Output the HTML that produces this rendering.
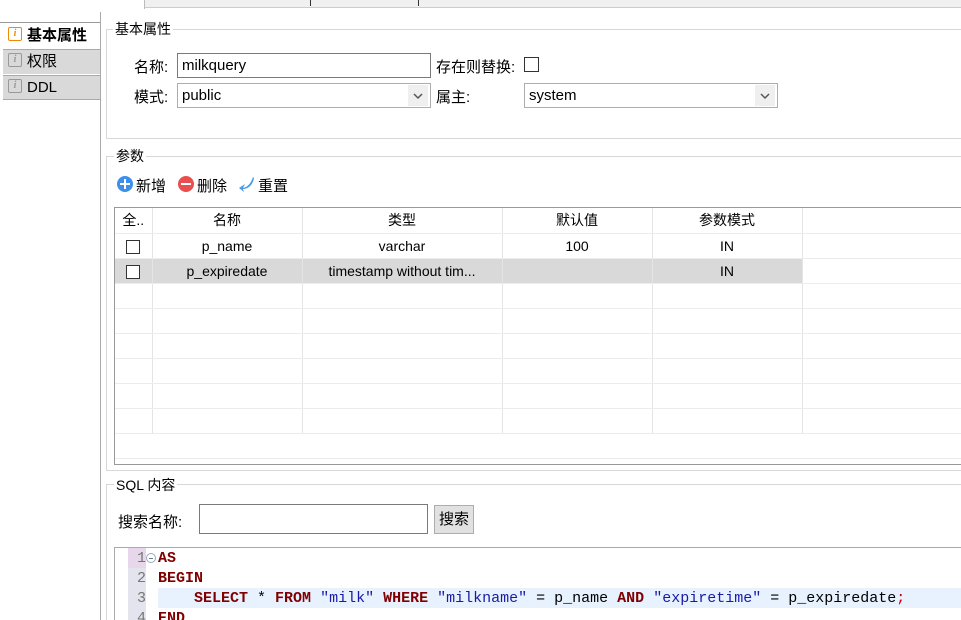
<!DOCTYPE html>
<html><head><meta charset="utf-8"><style>
*{box-sizing:border-box;margin:0;padding:0}
html,body{width:961px;height:620px;overflow:hidden}
body{background:#fff;font-family:"Liberation Sans","Noto Sans CJK SC",sans-serif;font-size:14px;color:#000;position:relative}
.a{position:absolute}
.grp{position:absolute;border:1px solid #d8d8d8;border-right:none}
.lg{position:absolute;background:#fff;padding:0 2px;font-size:14px;line-height:16px}
.inp{position:absolute;border:1px solid #7a7a7a;background:#fff;font-size:15px;padding-left:4px;line-height:23px}
.sel{position:absolute;border:1px solid #adadad;background:#fff;font-size:15px;padding-left:4px;line-height:23px}
.arr{position:absolute;right:2px;top:1px;width:20px;height:21px;background:#efefef}
.ti{position:absolute;left:8px;width:14px;height:14px;border:1px solid #999;border-radius:2px;font:italic bold 10px "Liberation Serif",serif;color:#999;text-align:center;line-height:12px}
table{border-collapse:collapse;font-size:14px}
td{border-right:1px solid #e4e4e4;border-bottom:1px solid #ececec;height:25px;text-align:center;padding:0}
.cb{display:inline-block;width:14px;height:14px;border:1px solid #333;vertical-align:middle}
.code{font-family:"Liberation Mono","DejaVu Sans Mono",monospace;font-size:15px;line-height:20px;white-space:pre}
.k{color:#7f0000;font-weight:bold}.s{color:#1a1aa6}
</style></head><body>
<div class="a" style="left:0;top:0;width:961px;height:8px;background:#f0f0f0;border-bottom:1px solid #ccc"></div>
<div class="a" style="left:0;top:0;width:145px;height:9px;background:#fff;border-right:1px solid #bbb"></div>
<div class="a" style="left:310px;top:0;width:1px;height:6px;background:#333"></div>
<div class="a" style="left:418px;top:0;width:1px;height:6px;background:#333"></div>
<div class="a" style="left:100px;top:12px;width:1px;height:608px;background:#aaa"></div>
<div class="a" style="left:0;top:22px;width:100px;height:1px;background:#999"></div>
<div class="a" style="left:0;top:24px;width:100px;height:24px;font-weight:bold;font-size:15px;line-height:24px;padding-left:27px"><span class="ti" style="top:3px;border-color:#f08a00;color:#f08a00">i</span>基本属性</div>
<div class="a" style="left:3px;top:49px;width:97px;height:25px;background:#d9d9d9;border-top:1px solid #aaa;line-height:24px;padding-left:24px;font-size:15px"><span class="ti" style="left:5px;top:3px">i</span>权限</div>
<div class="a" style="left:3px;top:75px;width:97px;height:25px;background:#d9d9d9;border-top:1px solid #aaa;border-bottom:1px solid #aaa;line-height:24px;padding-left:24px;font-size:15px"><span class="ti" style="left:5px;top:3px">i</span>DDL</div>

<div class="grp" style="left:106px;top:29px;width:855px;height:110px"></div>
<div class="lg" style="left:113px;top:21px">基本属性</div>
<div class="a" style="left:134px;top:56px;font-size:15px">名称:</div>
<div class="inp" style="left:177px;top:53px;width:254px;height:25px">milkquery</div>
<div class="a" style="left:436px;top:56px;font-size:15px">存在则替换:</div>
<div class="a" style="left:524px;top:57px;width:15px;height:15px;border:1px solid #333"></div>
<div class="a" style="left:134px;top:86px;font-size:15px">模式:</div>
<div class="sel" style="left:177px;top:83px;width:254px;height:25px">public<div class="arr"><svg width="20" height="21"><path d="M6 9l4 4 4-4" fill="none" stroke="#555" stroke-width="1.5"/></svg></div></div>
<div class="a" style="left:436px;top:86px;font-size:15px">属主:</div>
<div class="sel" style="left:524px;top:83px;width:254px;height:25px">system<div class="arr"><svg width="20" height="21"><path d="M6 9l4 4 4-4" fill="none" stroke="#555" stroke-width="1.5"/></svg></div></div>

<div class="grp" style="left:106px;top:156px;width:855px;height:315px"></div>
<div class="lg" style="left:114px;top:148px">参数</div>
<div class="a" style="left:117px;top:176px;width:16px;height:16px;border-radius:50%;background:#3d8fe8"><div class="a" style="left:3px;top:7px;width:10px;height:2px;background:#fff"></div><div class="a" style="left:7px;top:3px;width:2px;height:10px;background:#fff"></div></div>
<div class="a" style="left:136px;top:175px;font-size:15px">新增</div>
<div class="a" style="left:178px;top:176px;width:16px;height:16px;border-radius:50%;background:#e85050"><div class="a" style="left:3px;top:7px;width:10px;height:2px;background:#fff"></div></div>
<div class="a" style="left:197px;top:175px;font-size:15px">删除</div>
<svg class="a" style="left:238px;top:175px" width="18" height="18"><path d="M15 2 C13 8 10 12 5 13 L7 9 L1 13 L6 17 L5 14 C11 14 15 9 16 3Z" fill="#4a9be8"/></svg>
<div class="a" style="left:258px;top:175px;font-size:15px">重置</div>

<div class="a" style="left:114px;top:207px;width:847px;height:258px;border:1px solid #999;border-right:none;background:repeating-linear-gradient(#fff 0 24px,#ececec 24px 25px);background-position:0 1px">
<table style="width:846px">
<tr style="background:#fff"><td style="width:37px">全..</td><td style="width:150px">名称</td><td style="width:200px">类型</td><td style="width:150px">默认值</td><td style="width:150px">参数模式</td><td style="border-right:none"></td></tr>
<tr style="background:#fff"><td><span class="cb"></span></td><td>p_name</td><td>varchar</td><td>100</td><td>IN</td><td style="border-right:none"></td></tr>
<tr style="background:#d9d9d9"><td><span class="cb" style="background:#fff"></span></td><td>p_expiredate</td><td>timestamp without tim...</td><td></td><td>IN</td><td style="background:#fff;border-right:none"></td></tr>
<tr><td></td><td></td><td></td><td></td><td></td><td style="border-right:none"></td></tr>
<tr><td></td><td></td><td></td><td></td><td></td><td style="border-right:none"></td></tr>
<tr><td></td><td></td><td></td><td></td><td></td><td style="border-right:none"></td></tr>
<tr><td></td><td></td><td></td><td></td><td></td><td style="border-right:none"></td></tr>
<tr><td></td><td></td><td></td><td></td><td></td><td style="border-right:none"></td></tr>
<tr><td></td><td></td><td></td><td></td><td></td><td style="border-right:none"></td></tr>
</table></div>

<div class="grp" style="left:106px;top:484px;width:855px;height:140px"></div>
<div class="lg" style="left:114px;top:477px">SQL 内容</div>
<div class="a" style="left:118px;top:511px;font-size:15px">搜索名称:</div>
<div class="inp" style="left:199px;top:504px;width:229px;height:30px"></div>
<div class="a" style="left:434px;top:505px;width:40px;height:29px;background:#e1e1e1;border:1px solid #adadad;text-align:center;line-height:27px;font-size:15px">搜索</div>

<div class="a" style="left:114px;top:547px;width:847px;height:80px;border:1px solid #aaa;border-right:none"></div>
<div class="a" style="left:128px;top:548px;width:18px;height:80px;background:#e4e4ee"></div>
<div class="a" style="left:128px;top:548px;width:18px;height:20px;background:#e6d8ea"></div>
<div class="a" style="left:158px;top:588px;width:803px;height:20px;background:#e8f2fe"></div>
<div class="a code" style="left:128px;top:549px;color:#777;width:18px;text-align:right">1
2
3
4</div>
<div class="a" style="left:146px;top:553px;width:10px;height:10px;border:1px solid #9ab;border-radius:50%"><div class="a" style="left:2px;top:3.5px;width:4px;height:1px;background:#678"></div></div>
<div class="a code" style="left:158px;top:549px"><span class="k">AS</span>
<span class="k">BEGIN</span>
    <span class="k">SELECT</span> * <span class="k">FROM</span> <span class="s">"milk"</span> <span class="k">WHERE</span> <span class="s">"milkname"</span> = p_name <span class="k">AND</span> <span class="s">"expiretime"</span> = p_expiredate<span style="color:#c00">;</span>
<span class="k">END</span></div>
</body></html>
